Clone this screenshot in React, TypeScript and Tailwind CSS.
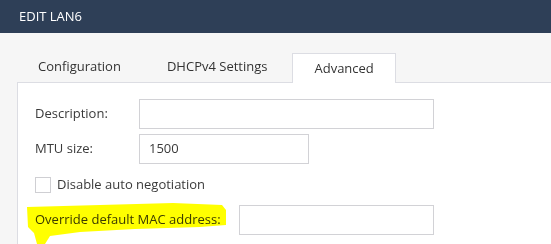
import React from "react";

const TABS = ["Configuration", "DHCPv4 Settings", "Advanced"];
const ACTIVE = "Advanced";

function Field({ label, width, value, labelW = "w-[104px]" }: { label: string; width: string; value?: string; labelW?: string }) {
  return (
    <div className="flex items-center h-[30px]">
      <div className={`${labelW} shrink-0 text-[13px] text-[#3a3a3a]`}>{label}</div>
      <div className={`${width} h-[30px] border border-[#d2d2d6] bg-white flex items-center px-[9px] text-[13px] text-[#3a3a3a]`}>
        {value}
      </div>
    </div>
  );
}

function Highlighter() {
  return (
    <svg
      className="absolute left-0 top-0 pointer-events-none mix-blend-multiply"
      width="551"
      height="244"
      viewBox="0 0 551 244"
    >
      <path
        d="M27 207 L100 205 L173 203 L222 205 L226 210 L226 225 L200 227 L135 229 L80 232 L50 236 L45 244 L37 244 L34 233 L28 227 Z"
        fill="#ffff00"
      />
    </svg>
  );
}

export default function App() {
  return (
    <div
      className="relative w-[551px] h-[244px] overflow-hidden bg-[#f6f6f6]"
      style={{ fontFamily: '"Open Sans", "Noto Sans", sans-serif' }}
    >
      <div className="h-[33px] bg-[#2e3f57] flex items-center pl-[19px] text-[13px] text-white">EDIT LAN6</div>

      <div className="pt-[19px] pl-[17px]">
        <div className="flex gap-[4px] h-[30px]">
          {TABS.map((t) => (
            <div
              key={t}
              className={
                t === ACTIVE
                  ? "px-[21px] flex items-center text-[13px] text-[#333] bg-white border border-b-0 border-[#dcdde3] relative top-[1px] h-[30px]"
                  : "px-[21px] flex items-center text-[13px] text-[#333]"
              }
            >
              {t}
            </div>
          ))}
        </div>

        <div className="bg-white border-l border-t border-[#dcdde3] h-[200px] pl-[17px] pt-[16px]">
          <div className="flex flex-col gap-[5px]">
            <Field label="Description:" width="w-[295px]" />
            <Field label="MTU size:" width="w-[170px]" value="1500" />
          </div>
          <div className="flex items-center gap-[6px] mt-[13px] h-[16px]">
            <div className="w-[16px] h-[16px] border border-[#cfcfd3] bg-white" />
            <span className="text-[13px] text-[#3a3a3a]">Disable auto negotiation</span>
          </div>
          <div className="mt-[12px]">
            <Field label="Override default MAC address:" labelW="w-[204px]" width="w-[195px]" />
          </div>
        </div>
      </div>

      <Highlighter />
    </div>
  );
}
